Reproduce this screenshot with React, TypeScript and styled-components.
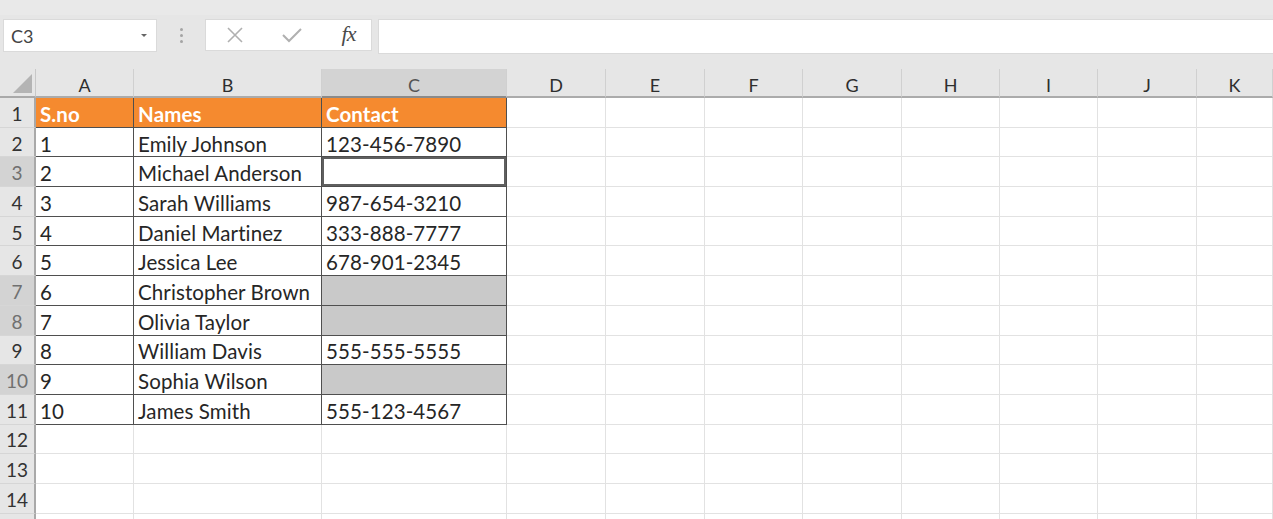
import React from 'react'
import styled, { createGlobalStyle, css } from 'styled-components'

const GlobalStyle = createGlobalStyle`
  body {
    margin: 0;
    background: #e6e6e6;
    font-family: Lato, 'Liberation Sans', sans-serif;
    overflow: hidden;
  }
`

const Window = styled.div`
  width: 1273px;
  height: 519px;
  display: flex;
  flex-flow: column;
  background: #e6e6e6;
  overflow: hidden;
`

const FormulaBar = styled.div`
  flex-shrink: 0;
  display: flex;
  align-items: flex-start;
  height: 69px;
  padding: 4px 0 0 3px;
  box-sizing: border-box;
  border-top: 15px solid #e9e9e9;
`

const NameBox = styled.div`
  width: 154px;
  height: 33px;
  box-sizing: border-box;
  background: #fff;
  border: 1px solid #dadada;
  display: flex;
  align-items: center;
  justify-content: space-between;
  padding: 0 9px 0 7px;
  font-size: 18px;
  color: #444;
`

const Caret = styled.span`
  width: 0;
  height: 0;
  border-left: 3px solid transparent;
  border-right: 3px solid transparent;
  border-top: 3px solid #666;
`

const Grip = styled.div`
  width: 48px;
  height: 33px;
  display: flex;
  flex-flow: column;
  align-items: center;
  justify-content: center;
  gap: 3px;

  span {
    width: 3px;
    height: 3px;
    border-radius: 50%;
    background: #a4a4a4;
  }
`

const ButtonBox = styled.div`
  width: 167px;
  height: 32px;
  box-sizing: border-box;
  background: #fff;
  border: 1px solid #dadada;
  display: flex;
  align-items: center;
  padding-left: 16px;
  gap: 32px;
`

const BarIcon = styled.span`
  width: 25px;
  display: flex;
  justify-content: center;
  align-items: center;
`

const Fx = styled.span`
  font-family: 'Liberation Serif', serif;
  font-style: italic;
  font-size: 22px;
  color: #4a4a4a;
  letter-spacing: -1px;
  margin-top: -2px;
`

const FormulaInput = styled.div`
  flex: 1;
  height: 33px;
  margin-left: 6px;
  background: #fff;
  border: 1px solid #dadada;
  border-right: none;
`

const Grid = styled.div`
  flex-shrink: 0;
  display: grid;
  grid-template-columns: 36px 98px 188px 185px 99px 99px 98px 99px 98px 98px 99px 76px;
  grid-template-rows: 29px;
  grid-auto-rows: 29.7px;
  background: #fff;
  font-size: 20.5px;
`

const Corner = styled.div`
  background: #e6e6e6;
  border-right: 1px solid #c8c8c8;
  border-bottom: 2px solid #a9a9a9;
  position: relative;

  &::after {
    content: '';
    position: absolute;
    right: 3px;
    bottom: 3px;
    width: 0;
    height: 0;
    border-left: 19px solid transparent;
    border-bottom: 19px solid #b4b4b4;
  }
`

const ColHead = styled.div<{ $active?: boolean }>`
  display: flex;
  align-items: center;
  justify-content: center;
  padding-top: 4px;
  box-sizing: border-box;
  font-size: 18px;
  background: ${p => (p.$active ? '#d3d3d3' : '#e6e6e6')};
  color: ${p => (p.$active ? '#555' : '#2e2e2e')};
  border-right: 1px solid #d0d0d0;
  border-bottom: 2px solid ${p => (p.$active ? '#8a8a8a' : '#ababab')};
`

const RowHead = styled.div<{ $active?: boolean }>`
  display: flex;
  align-items: center;
  justify-content: center;
  padding-top: 2px;
  background: ${p => (p.$active ? '#d3d3d3' : '#e6e6e6')};
  color: ${p => (p.$active ? '#707070' : '#333')};
  border-right: 2px solid #a9a9a9;
  border-bottom: 1px solid #d6d6d6;
  box-sizing: border-box;
  font-size: 19px;
`

const Cell = styled.div<{ $framed?: boolean; $header?: boolean; $filled?: boolean; $current?: boolean }>`
  display: flex;
  align-items: center;
  padding: 3px 0 0 4px;
  box-sizing: border-box;
  white-space: nowrap;
  color: #262626;
  letter-spacing: 0.1px;
  border-right: 1px solid #e2e2e2;
  border-bottom: 1px solid #e2e2e2;

  ${p =>
    p.$framed &&
    css`
      border-right: 1.5px solid #4f4f4f;
      border-bottom: 1.5px solid #4f4f4f;
    `}
  ${p =>
    p.$header &&
    css`
      background: #f58a2f;
      color: #fff;
      font-weight: 700;
    `}
  ${p =>
    p.$filled &&
    css`
      background: #c9c9c9;
    `}
  ${p =>
    p.$current &&
    css`
      box-shadow: inset 0 0 0 2px #5f5f5f;
    `}
`

const columns = ['A', 'B', 'C', 'D', 'E', 'F', 'G', 'H', 'I', 'J', 'K']

const rows: [string, string, string][] = [
  ['S.no', 'Names', 'Contact'],
  ['1', 'Emily Johnson', '123-456-7890'],
  ['2', 'Michael Anderson', ''],
  ['3', 'Sarah Williams', '987-654-3210'],
  ['4', 'Daniel Martinez', '333-888-7777'],
  ['5', 'Jessica Lee', '678-901-2345'],
  ['6', 'Christopher Brown', ''],
  ['7', 'Olivia Taylor', ''],
  ['8', 'William Davis', '555-555-5555'],
  ['9', 'Sophia Wilson', ''],
  ['10', 'James Smith', '555-123-4567'],
  ['', '', ''],
  ['', '', ''],
  ['', '', ''],
  ['', '', ''],
]

const selectedRows = [3, 7, 8, 10]
const filledRows = [7, 8, 10]

const App = () => (
  <Window>
    <GlobalStyle />
    <FormulaBar>
      <NameBox>
        C3
        <Caret />
      </NameBox>
      <Grip>
        <span />
        <span />
        <span />
      </Grip>
      <ButtonBox>
        <BarIcon>
          <svg width="18" height="18" viewBox="0 0 18 18">
            <path d="M2 2 L16 16 M16 2 L2 16" stroke="#b0b0b0" strokeWidth="1.6" fill="none" />
          </svg>
        </BarIcon>
        <BarIcon>
          <svg width="20" height="16" viewBox="0 0 20 16">
            <path d="M1 8 L7 14 L19 2" stroke="#b0b0b0" strokeWidth="2" fill="none" />
          </svg>
        </BarIcon>
        <BarIcon>
          <Fx>fx</Fx>
        </BarIcon>
      </ButtonBox>
      <FormulaInput />
    </FormulaBar>
    <Grid>
      <Corner />
      {columns.map(c => (
        <ColHead key={c} $active={c === 'C'}>
          {c}
        </ColHead>
      ))}
      {rows.map((row, i) => {
        const n = i + 1
        const framed = n <= 11
        return (
          <React.Fragment key={n}>
            {/* the 15th row is only a sliver at the bottom edge, so no number */}
            <RowHead $active={selectedRows.includes(n)}>{n < 15 ? n : ''}</RowHead>
            {columns.map((c, j) => (
              <Cell
                key={c}
                $framed={framed && j < 3}
                $header={n === 1 && j < 3}
                $filled={j === 2 && filledRows.includes(n)}
                $current={j === 2 && n === 3}
              >
                {j < 3 ? row[j] : ''}
              </Cell>
            ))}
          </React.Fragment>
        )
      })}
    </Grid>
  </Window>
)

export default App
